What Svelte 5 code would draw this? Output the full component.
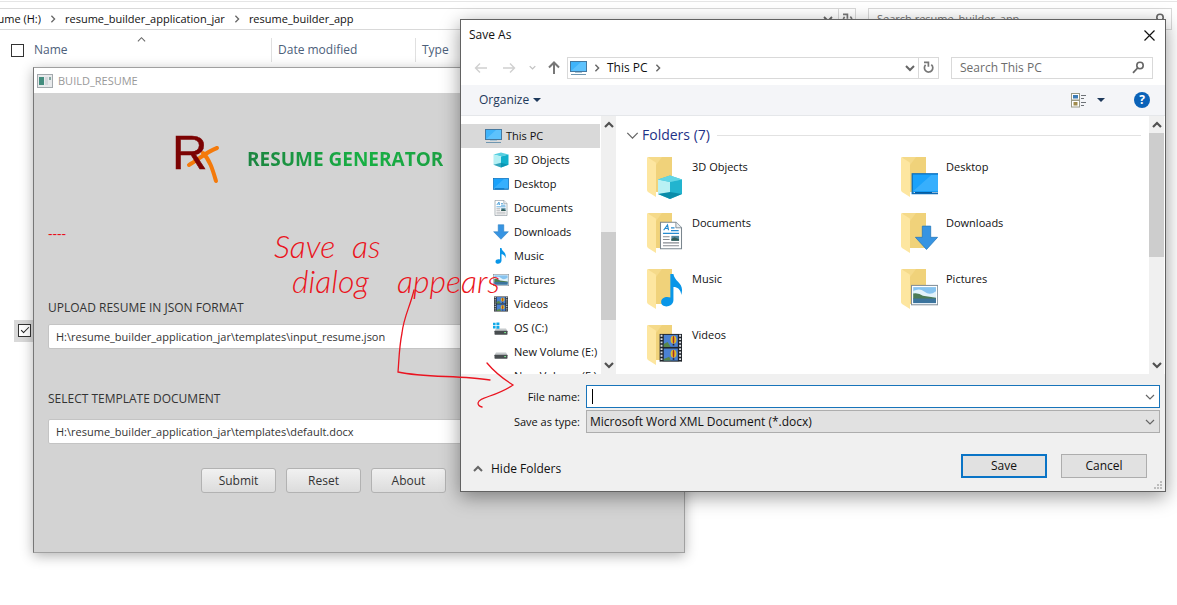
<script lang="ts">
	let jsonPath = $state('H:\\resume_builder_application_jar\\templates\\input_resume.json');
	let templatePath = $state('H:\\resume_builder_application_jar\\templates\\default.docx');
	let explorerSearch = $state('');
	let dialogSearch = $state('');
	let fileName = $state('');
	let fileType = $state('docx');
	let selected = $state('This PC');
	let rowChecked = $state(true);
	let allChecked = $state(false);

	const tree = [
		{ name: '3D Objects', icon: 'cube' },
		{ name: 'Desktop', icon: 'desktop' },
		{ name: 'Documents', icon: 'document' },
		{ name: 'Downloads', icon: 'download' },
		{ name: 'Music', icon: 'music' },
		{ name: 'Pictures', icon: 'picture' },
		{ name: 'Videos', icon: 'video' },
		{ name: 'OS (C:)', icon: 'osdrive' },
		{ name: 'New Volume (E:)', icon: 'drive' },
		{ name: 'New Volume (F:)', icon: 'drive' }
	];

	const folders = [
		{ name: '3D Objects', icon: 'cube' },
		{ name: 'Desktop', icon: 'desktop' },
		{ name: 'Documents', icon: 'document' },
		{ name: 'Downloads', icon: 'download' },
		{ name: 'Music', icon: 'music' },
		{ name: 'Pictures', icon: 'picture' },
		{ name: 'Videos', icon: 'video' }
	];

	function reset() {
		jsonPath = '';
		templatePath = '';
	}
</script>

{#snippet chevron(dir: string, size: number, width: number)}
	<svg class="chevron {dir}" width={size} height={size} viewBox="0 0 10 10" aria-hidden="true">
		<path d="M1 3 L5 7 L9 3" fill="none" stroke="currentColor" stroke-width={width} />
	</svg>
{/snippet}

{#snippet refresh()}
	<svg width="13" height="13" viewBox="0 0 13 13" aria-hidden="true">
		<path d="M9.3 3.6 A4.2 4.2 0 1 1 3.6 3.9" fill="none" stroke="#777" stroke-width="1.7" />
		<path d="M2 1.4 H6.4 V5.8" fill="none" stroke="#777" stroke-width="1.7" />
	</svg>
{/snippet}

{#snippet magnifier()}
	<svg width="13" height="13" viewBox="0 0 13 13" aria-hidden="true">
		<circle cx="8" cy="4.5" r="3.2" fill="none" stroke="#666" stroke-width="1.6" />
		<path d="M5.6 7 L1 11.8" stroke="#666" stroke-width="1.8" />
	</svg>
{/snippet}

{#snippet monitor()}
	<svg width="17" height="16" viewBox="0 0 17 16" aria-hidden="true">
		<rect x="0.5" y="1.5" width="16" height="10" fill="#3fb4fb" stroke="#45789f" />
		<path d="M1 11 L11 2 H16 V11 Z" fill="#72cbff" opacity="0.6" />
		<path d="M5 12.5 H12" stroke="#a8c3d4" />
		<path d="M1 14.5 H16" stroke="#6f96b0" />
	</svg>
{/snippet}

{#snippet glyph(icon: string)}
	{#if icon === 'cube'}
		<path d="M8 0.5 L15.5 2.6 L8 4.6 L0.5 2.6 Z" fill="#57cfe0" />
		<path d="M0.5 2.6 L8 4.6 V15.6 L0.5 12.8 Z" fill="#b4f0f4" />
		<path d="M15.5 2.6 L8 4.6 V15.6 L15.5 12.8 Z" fill="#12b0cb" />
		<path d="M0.5 12.8 L8 10.8 L15.5 12.8 L8 15.6 Z" fill="#0a8ca9" opacity="0.75" />
	{:else if icon === 'desktop'}
		<rect x="0.4" y="2.4" width="15.2" height="11" fill="#1aa2fb" stroke="#0a6dba" stroke-width="0.7" />
		<path d="M1 12 L11 3 H15 V12 Z" fill="#50baff" opacity="0.55" />
		<path d="M1 12.8 H15" stroke="#075b9e" stroke-width="0.7" />
		<path d="M1.2 12.8 H2 M11.6 12.8 H14.6" stroke="#fff" stroke-width="0.5" stroke-dasharray="0.7 0.4" />
	{:else if icon === 'document'}
		<path d="M2 0.4 H10.8 L14 3.6 V15.6 H2 Z" fill="#fff" stroke="#7b868e" stroke-width="0.6" />
		<path d="M10.8 0.4 V3.6 H14" fill="#e9eef1" stroke="#7b868e" stroke-width="0.5" />
		<path d="M3.8 5 L6 2 L6.6 5 M4.6 4 H6.4 M8 3.6 H10 M8 5.2 H12.4 M3.4 6.8 H12.6" fill="none" stroke="#258bd0" stroke-width="0.7" />
		<path d="M3.4 8.7 H7.2 M3.4 10.3 H7.2 M3.4 12.2 H12.6 M3.4 13.9 H12.6" stroke="#878b91" stroke-width="0.6" />
		<path d="M8.2 8.2 H12.6 V11 H8.2 Z" fill="#5389a0" />
		<path d="M8.2 10 L10 9 L12.6 10.2 V11 H8.2 Z" fill="#335c56" />
	{:else if icon === 'download'}
		<path d="M5.2 0.7 H10.8 V7.7 H15.4 L8 15.3 L0.6 7.7 H5.2 Z" fill="#3794e2" stroke="#2478bc" stroke-width="0.5" />
	{:else if icon === 'music'}
		<path d="M7 0 H8.5 C9 4 14.2 4.3 12.3 10.2 C12.2 7.3 10 6.2 8.5 6.3 V12.8 C8.3 16.5 2.5 16.8 2.5 13.7 C2.5 11.4 5.2 10.8 7 11.5 Z" fill="#0996e8" />
	{:else if icon === 'picture'}
		<rect x="0.3" y="2.3" width="15.4" height="11.4" fill="#fff" stroke="#7f8d97" stroke-width="0.6" />
		<rect x="1.3" y="3.3" width="13.4" height="9.4" fill="#86c3ef" />
		<path d="M1.3 5.6 Q5 3.5 8 6 T14.7 5.7 V10 H1.3 Z" fill="#e2f2fa" />
		<path d="M1.3 7 Q4.5 6.4 7 8.4 L14.7 9.6 V10.5 H1.3 Z" fill="#4b7b55" />
		<path d="M1.3 10 H14.7 V12.7 H1.3 Z" fill="#3c749d" />
	{:else if icon === 'video'}
		<rect x="1" y="0.5" width="14" height="15" fill="#20252b" />
		<path d="M2.2 1 V15.5 M13.8 1 V15.5" stroke="#dce0e2" stroke-width="1.2" stroke-dasharray="1 0.8" />
		<rect x="3.6" y="1" width="8.8" height="6.5" fill="#4b82d2" />
		<rect x="3.6" y="8.4" width="8.8" height="6.5" fill="#4b82d2" />
		<path d="M3.6 6 L6 4.8 L8 7.5 H3.6 Z M3.6 14 L7 12.8 L8 14.9 H3.6 Z" fill="#59874a" />
		<ellipse cx="9.7" cy="3.6" rx="1.8" ry="2.1" fill="#e2bd29" />
		<ellipse cx="9.7" cy="3.6" rx="0.5" ry="2.1" fill="#a52b28" />
		<ellipse cx="9.7" cy="11.2" rx="1.8" ry="2.1" fill="#e2bd29" />
		<ellipse cx="9.7" cy="11.2" rx="0.5" ry="2.1" fill="#a52b28" />
		<path d="M9.2 6.4 H10.2 M9.2 14 H10.2" stroke="#2a2020" stroke-width="0.8" />
	{:else}
		<path d="M3 8.5 H13 L14.5 11 H1.5 Z" fill="#c6cacc" />
		<rect x="1.5" y="10.7" width="13" height="4" rx="0.6" fill="#484d50" />
		<rect x="11.2" y="12" width="1.8" height="1.1" fill="#78e58c" />
		{#if icon === 'osdrive'}
			<path d="M0 2.8 H2.6 V5.2 H0 Z M3.4 2.4 H6.4 V5.2 H3.4 Z M0 6 H2.6 V8.4 H0 Z M3.4 6 H6.4 V8.8 H3.4 Z" fill="#10a9e8" />
		{/if}
	{/if}
{/snippet}

{#snippet folderIcon(icon: string)}
	<svg width="37" height="42" viewBox="0 0 37 42" aria-hidden="true">
		<path d="M1 0 H25 V35 H9 Z" fill="#f5da8a" />
		<path d="M15 0 H25 V35 H9 V8 Z" fill="#edcd70" opacity="0.6" />
		<path d="M0 0 L8 5 Q9 5 9 7 V40 L1 35 Q0 34 0 33 Z" fill="#fde6a0" />
		{#if icon === 'cube'}
			<path d="M11 22.5 L23 18.5 L35 22.5 V37 L23 42 L11 37 Z" fill="#3fc4d8" />
			<path d="M11 22.5 L23 25 V36 L11 37 Z" fill="#b9f1f4" />
			<path d="M35 22.5 L23 25 V36 L35 37 Z" fill="#22b4cf" />
			<path d="M11 22.5 L23 18.5 L35 22.5 L23 25 Z" fill="#62d6e5" />
			<path d="M11 37 L23 35 L35 37 L23 42 Z" fill="#0a8ca9" />
		{:else if icon === 'desktop'}
			<g transform="translate(10.5 12.5) scale(1.8)">{@render glyph(icon)}</g>
		{:else if icon === 'document'}
			<g transform="translate(10 8.5) scale(1.75)">{@render glyph(icon)}</g>
		{:else if icon === 'download'}
			<g transform="translate(13.5 12) scale(1.5 1.6)">{@render glyph(icon)}</g>
		{:else if icon === 'music'}
			<g transform="translate(9 5) scale(2.05)">{@render glyph(icon)}</g>
		{:else if icon === 'picture'}
			<g transform="translate(10 12.5) scale(1.7)">{@render glyph(icon)}</g>
		{:else}
			<g transform="translate(11 8) scale(1.6 1.85)">{@render glyph(icon)}</g>
		{/if}
	</svg>
{/snippet}

<div class="desktop">
	<section class="explorer">
		<div class="explorer-nav">
			<div class="explorer-path">
				<span class="crumb first">Resume (H:)</span>
				{@render chevron('right', 8, 1.6)}
				<span class="crumb">resume_builder_application_jar</span>
				{@render chevron('right', 8, 1.6)}
				<span class="crumb">resume_builder_app</span>
				<span class="spacer"></span>
				<button class="flat" aria-label="Previous locations">{@render chevron('down', 10, 1.8)}</button>
				<button class="flat refresh" aria-label="Refresh">{@render refresh()}</button>
			</div>
			<div class="explorer-search">
				<input aria-label="Search folder" placeholder="Search resume_builder_app" bind:value={explorerSearch} />
				{@render magnifier()}
			</div>
		</div>
		<div class="columns">
			<div class="col name-col">
				<span class="sort">{@render chevron('up', 9, 1.2)}</span>
				<label><input type="checkbox" bind:checked={allChecked} />Name</label>
			</div>
			<div class="col date-col">Date modified</div>
			<div class="col">Type</div>
		</div>
		<div class="selected-row">
			<input type="checkbox" aria-label="Select item" bind:checked={rowChecked} />
		</div>
	</section>

	<section class="app-window">
		<header class="app-title">
			<svg width="16" height="14" viewBox="0 0 16 14" aria-hidden="true">
				<rect x="0.5" y="0.5" width="15" height="13" fill="#e8eaec" stroke="#a3a9ad" />
				<rect x="2" y="3" width="5" height="8" fill="#438d7e" />
				<rect x="8" y="3" width="3" height="8" fill="#d3d8dc" />
				<rect x="12" y="3" width="2" height="3" fill="#84a9a3" />
			</svg>
			<span>BUILD_RESUME</span>
		</header>
		<div class="app-body">
			<div class="brand">
				<svg width="56" height="56" viewBox="0 0 56 56" aria-hidden="true">
					<path d="M22 34 C31 29 39 21 50 17" fill="none" stroke="#f47a0b" stroke-width="4" stroke-linecap="round" />
					<path d="M36 22 C43 29 46 40 49 50" fill="none" stroke="#f47a0b" stroke-width="4" stroke-linecap="round" />
					<text x="5" y="38" font-family="Liberation Sans" font-size="49" fill="#7c0303" stroke="#7c0303" stroke-width="0.5">R</text>
				</svg>
				<h1>RESUME GENERATOR</h1>
			</div>
			<p class="message">----</p>
			<label for="json-path">UPLOAD RESUME IN JSON FORMAT</label>
			<input id="json-path" bind:value={jsonPath} />
			<label for="template-path">SELECT TEMPLATE DOCUMENT</label>
			<input id="template-path" bind:value={templatePath} />
			<div class="app-buttons">
				<button>Submit</button>
				<button onclick={reset}>Reset</button>
				<button>About</button>
			</div>
		</div>
	</section>

	<section class="dialog" role="dialog" aria-label="Save As">
		<header class="dialog-title">
			<span>Save As</span>
			<button class="flat" aria-label="Close">
				<svg width="11" height="11" viewBox="0 0 11 11"><path d="M0.5 0.5 L10.5 10.5 M10.5 0.5 L0.5 10.5" stroke="#111" stroke-width="1.2" /></svg>
			</button>
		</header>

		<div class="nav">
			<div class="nav-arrows">
				<button class="flat" aria-label="Back">
					<svg width="13" height="12" viewBox="0 0 13 12"><path d="M13 6 H1.5 M6 1.5 L1.5 6 L6 10.5" fill="none" stroke="#d0d0d0" stroke-width="1.4" /></svg>
				</button>
				<button class="flat forward" aria-label="Forward">
					<svg width="13" height="12" viewBox="0 0 13 12"><path d="M0 6 H11.5 M7 1.5 L11.5 6 L7 10.5" fill="none" stroke="#d0d0d0" stroke-width="1.4" /></svg>
				</button>
				<button class="flat pale" aria-label="Recent">{@render chevron('down', 7, 1.8)}</button>
				<button class="flat" aria-label="Up">
					<svg width="12" height="13" viewBox="0 0 12 13"><path d="M6 13 V2 M1 6.5 L6 1.5 L11 6.5" fill="none" stroke="#777" stroke-width="2" /></svg>
				</button>
			</div>
			<div class="address">
				{@render monitor()}
				{@render chevron('right', 8, 1.8)}
				<span>This PC</span>
				{@render chevron('right', 8, 1.8)}
				<span class="spacer"></span>
				<button class="flat" aria-label="Locations">{@render chevron('down', 10, 2)}</button>
				<button class="flat refresh" aria-label="Refresh This PC">{@render refresh()}</button>
			</div>
			<div class="search">
				<input aria-label="Search This PC" placeholder="Search This PC" bind:value={dialogSearch} />
				{@render magnifier()}
			</div>
		</div>

		<div class="toolbar">
			<button class="flat organize">Organize <i class="triangle"></i></button>
			<span class="spacer"></span>
			<button class="flat view" aria-label="Change view">
				<svg width="16" height="15" viewBox="0 0 16 15">
					<rect x="0.5" y="0.5" width="8" height="6.5" fill="#fff" stroke="#9a9a86" />
					<rect x="0.5" y="7.5" width="8" height="6.5" fill="#fff" stroke="#9a9a86" />
					<rect x="2" y="2" width="5" height="3.5" fill="#3d7cb6" />
					<rect x="2.5" y="9" width="4" height="3.5" fill="#a08b4d" />
					<path d="M10 2.5 H15 M10 5.5 H13 M10 9.5 H15 M10 12.5 H13" stroke="#6d7277" />
				</svg>
				<i class="triangle"></i>
			</button>
			<button class="help" aria-label="Help">?</button>
		</div>

		<div class="browser">
			<nav class="tree">
				<button class="tree-item root" class:selected={selected === 'This PC'} onclick={() => selected = 'This PC'}>
					{@render monitor()}
					<span>This PC</span>
				</button>
				{#each tree as item (item.name)}
					<button class="tree-item" class:selected={selected === item.name} onclick={() => selected = item.name}>
						<svg width="16" height="16" viewBox="0 0 16 16" aria-hidden="true">{@render glyph(item.icon)}</svg>
						<span>{item.name}</span>
					</button>
				{/each}
			</nav>
			<div class="scrollbar tree-scroll">
				{@render chevron('up', 10, 2.2)}
				<div class="track"><div class="thumb"></div></div>
				{@render chevron('down', 10, 2.2)}
			</div>
			<div class="files">
				<div class="group">
					{@render chevron('down', 13, 1)}
					<h2>Folders (7)</h2>
					<hr />
				</div>
				<div class="folder-grid">
					{#each folders as folder (folder.name)}
						<button class="folder">
							{@render folderIcon(folder.icon)}
							<span>{folder.name}</span>
						</button>
					{/each}
				</div>
			</div>
			<div class="scrollbar file-scroll">
				{@render chevron('up', 10, 2.2)}
				<div class="track"><div class="thumb"></div></div>
				{@render chevron('down', 10, 2.2)}
			</div>
		</div>

		<div class="fields">
			<label for="file-name">File name:</label>
			<div class="combo name">
				<i class="caret"></i>
				<input id="file-name" bind:value={fileName} />
				{@render chevron('down', 10, 1.2)}
			</div>
			<label for="file-type">Save as type:</label>
			<div class="combo type">
				<select id="file-type" bind:value={fileType}>
					<option value="docx">Microsoft Word XML Document (*.docx)</option>
				</select>
				{@render chevron('down', 10, 1.2)}
			</div>
		</div>

		<footer class="dialog-footer">
			<button class="flat hide">{@render chevron('up', 10, 2)} Hide Folders</button>
			<span class="spacer"></span>
			<button class="action primary">Save</button>
			<button class="action">Cancel</button>
		</footer>
		<svg class="grip" width="9" height="9" viewBox="0 0 9 9" aria-hidden="true">
			<path d="M6 0 H8 V2 H6 Z M3 3 H5 V5 H3 Z M6 3 H8 V5 H6 Z M0 6 H2 V8 H0 Z M3 6 H5 V8 H3 Z M6 6 H8 V8 H6 Z" fill="#bdbdbd" />
		</svg>
	</section>

	<!-- red pen note over both windows -->
	<svg class="note" width="260" height="190" viewBox="0 0 260 190">
		<g class="pen-text">
			<text x="4" y="30">Save</text>
			<text x="82" y="30">as</text>
			<text x="22" y="65">dialog</text>
			<text x="127" y="65">appears</text>
		</g>
		<path d="M144 62 C140 79 134 88 132 105 C129 120 129 133 128 144 C155 150 190 147 220 152" />
		<path d="M217 135 Q227 147 243 157 C225 169 209 169 208 175 Q208 178 212 179" />
	</svg>
</div>

<style>
	:global(body) {
		margin: 0;
		background: #fff;
	}

	.desktop {
		position: relative;
		min-height: 100vh;
		overflow: hidden;
		font-family: 'Open Sans', 'Noto Sans', sans-serif;
		font-size: 12px;
		line-height: 16px;
		color: #111;
	}

	button, input, select {
		font: inherit;
		color: inherit;
		box-sizing: border-box;
		margin: 0;
	}

	svg {
		flex: none;
		display: block;
	}

	.spacer {
		flex: 1;
	}

	.flat {
		display: flex;
		align-items: center;
		justify-content: center;
		padding: 0;
		border: none;
		background: none;
	}

	.chevron {
		color: #666;
	}

	.chevron.right {
		transform: rotate(-90deg);
	}

	.chevron.up {
		transform: rotate(180deg);
	}

	/* explorer behind the windows */
	.explorer {
		padding-top: 1px;
	}

	.explorer-nav {
		display: flex;
		gap: 12px;
		padding: 6px 5px 0 0;
		border-top: 1px solid #e5e5e5;
		font-size: 11px;
	}

	.explorer-path, .explorer-search {
		display: flex;
		align-items: center;
		box-sizing: border-box;
		height: 22px;
		border: 1px solid #d9d9d9;
	}

	.explorer-path {
		flex: 1;
		gap: 8px;
		border-left: none;
	}

	.crumb.first {
		display: flex;
		justify-content: flex-end;
		width: 41px;
		overflow: hidden;
		white-space: nowrap;
	}

	.explorer-path .refresh {
		width: 17px;
		height: 20px;
		border-left: 1px solid #d9d9d9;
	}

	.explorer-search {
		width: 304px;
		padding: 0 6px 0 8px;
	}

	.explorer-search input, .search input {
		flex: 1;
		min-width: 0;
		padding: 0;
		border: none;
		outline: none;
		background: none;
	}

	input::placeholder {
		color: #6d6d6d;
		opacity: 1;
	}

	.columns {
		display: flex;
		height: 24px;
		margin-top: 8px;
		color: #4c607a;
	}

	.col {
		position: relative;
		display: flex;
		align-items: center;
		padding-left: 6px;
	}

	.name-col {
		width: 254px;
		padding-left: 11px;
		padding-right: 6px;
		border-right: 1px solid #e0e0e0;
	}

	.name-col label {
		display: flex;
		align-items: center;
		gap: 10px;
	}

	.sort {
		position: absolute;
		left: 137px;
		top: -3px;
	}

	.date-col {
		width: 137px;
		border-right: 1px solid #e0e0e0;
	}

	input[type='checkbox'] {
		display: grid;
		place-items: center;
		appearance: none;
		width: 13px;
		height: 13px;
		border: 1px solid #333;
		background: #fff;
	}

	input[type='checkbox']:checked::after {
		content: '';
		width: 7px;
		height: 3px;
		margin-bottom: 3px;
		border-left: 1px solid #222;
		border-bottom: 1px solid #222;
		transform: rotate(-45deg);
	}

	.selected-row {
		box-sizing: border-box;
		width: 40px;
		height: 22px;
		margin: 258px 0 0 14px;
		padding: 4px;
		background: #d9d9d9;
	}

	/* resume builder window */
	.app-window {
		position: absolute;
		left: 33px;
		right: 492px;
		top: 67px;
		border: 1px solid #a0a0a0;
		border-left-color: #777;
		background: #d3d3d3;
		box-shadow: 0 3px 12px rgba(0, 0, 0, 0.3);
		color: #333;
	}

	.app-title {
		display: flex;
		align-items: center;
		gap: 5px;
		height: 25px;
		padding-left: 3px;
		background: #fff;
		color: #999;
		font-size: 11px;
	}

	.app-body {
		display: flex;
		flex-direction: column;
		padding: 38px 14px 59px;
	}

	.brand {
		display: flex;
		align-items: center;
		gap: 24px;
		padding-left: 119px;
		height: 56px;
	}

	h1 {
		margin: 0;
		font-size: 19px;
		line-height: 24px;
		font-weight: 700;
		background: linear-gradient(90deg, #1c8440, #17b043 60%, #1ba043);
		background-clip: text;
		color: transparent;
	}

	.message {
		margin: 39px 0 58px;
		color: #e80c19;
		font-size: 14px;
	}

	.app-body > input {
		height: 25px;
		margin: 8px 0 42px;
		padding: 0 7px;
		border: 1px solid #c4c4c4;
		border-radius: 2px;
		background: #fff;
		font-size: 11px;
	}

	.app-body > #template-path {
		height: 25px;
		margin: 12px 0 24px;
	}

	.app-buttons {
		display: flex;
		gap: 10px;
		padding-left: 153px;
	}

	.app-buttons button {
		width: 75px;
		height: 25px;
		padding: 0;
		border: 1px solid #b2b2b2;
		border-radius: 3px;
		background: linear-gradient(#f1f1f1, #dcdcdc);
	}

	/* save as dialog */
	.dialog {
		position: absolute;
		left: 460px;
		right: 11px;
		top: 19px;
		border: 1px solid #626262;
		background: #f0f0f0;
		box-shadow: 0 5px 18px rgba(0, 0, 0, 0.4);
	}

	.dialog-title {
		display: flex;
		align-items: center;
		justify-content: space-between;
		height: 30px;
		padding: 0 10px 0 8px;
		background: #fff;
	}

	.nav {
		display: flex;
		align-items: center;
		height: 35px;
		padding: 0 12px 0 13px;
		box-sizing: border-box;
		background: #fff;
	}

	.nav-arrows {
		display: flex;
		align-items: center;
		justify-content: space-between;
		width: 86px;
		margin-right: 7px;
	}

	.nav-arrows .forward {
		margin-left: 4px;
	}

	.nav-arrows .pale {
		opacity: 0.4;
	}

	.address, .search {
		display: flex;
		align-items: center;
		box-sizing: border-box;
		height: 22px;
		border: 1px solid #d9d9d9;
	}

	.address {
		flex: 1;
		gap: 6px;
		padding-left: 2px;
	}

	.address .refresh {
		width: 20px;
		height: 20px;
		border-left: 1px solid #d9d9d9;
	}

	.address .refresh, .explorer-path .refresh {
		margin-left: -3px;
	}

	.search {
		width: 202px;
		margin-left: 12px;
		padding: 0 7px 0 8px;
	}

	.toolbar {
		display: flex;
		align-items: center;
		height: 30px;
		padding: 0 15px 0 18px;
		border-bottom: 1px solid #e5e7ea;
		background: #f4f5f8;
		color: #1e395b;
	}

	.triangle {
		border: 4px solid transparent;
		border-top-color: #1e395b;
		border-bottom: none;
	}

	.organize {
		gap: 4px;
	}

	.view {
		gap: 10px;
		margin-right: 29px;
	}

	.help {
		width: 16px;
		height: 16px;
		padding: 0;
		border: none;
		border-radius: 50%;
		background: #0a62b8;
		color: #fff;
		font-weight: 700;
		line-height: 16px;
	}

	.browser {
		display: flex;
		height: 258px;
		background: #fff;
		font-size: 11px;
	}

	.tree {
		width: 139px;
		padding-top: 8px;
		box-sizing: border-box;
		overflow: hidden;
	}

	.tree-item {
		display: flex;
		align-items: center;
		gap: 5px;
		width: 100%;
		height: 24px;
		padding: 0 0 0 32px;
		border: none;
		background: none;
		text-align: left;
		white-space: nowrap;
	}

	.tree-item.root {
		gap: 4px;
		padding-left: 24px;
	}

	.tree-item.selected {
		background: #d9d9d9;
	}

	.scrollbar {
		display: flex;
		flex-direction: column;
		align-items: center;
		width: 15px;
		padding: 4px 0;
		box-sizing: border-box;
		background: #f0f0f0;
	}

	.tree-scroll {
		margin: 0 1px;
	}

	.file-scroll {
		margin-right: 1px;
	}

	.scrollbar .chevron {
		color: #505050;
	}

	.track {
		flex: 1;
		width: 100%;
		margin: 3px 0;
	}

	.thumb {
		background: #cdcdcd;
	}

	.tree-scroll .thumb {
		height: 88px;
		margin-top: 99px;
	}

	.file-scroll .thumb {
		height: 124px;
	}

	.files {
		flex: 1;
		padding: 8px 8px 0 9px;
	}

	.group {
		display: flex;
		align-items: center;
		gap: 3px;
		height: 22px;
	}

	h2 {
		margin: 0;
		font-size: 14px;
		line-height: 20px;
		font-weight: 400;
		color: #1e3287;
	}

	hr {
		flex: 1;
		margin: 0 0 0 4px;
		border: none;
		border-top: 1px solid #e2e2e2;
	}

	.folder-grid {
		display: grid;
		grid-template-columns: 254px 1fr;
		grid-auto-rows: 56px;
		padding: 11px 0 0 21px;
	}

	.folder {
		display: flex;
		align-items: flex-start;
		gap: 8px;
		padding: 0;
		border: none;
		background: none;
		text-align: left;
	}

	.folder span {
		padding-top: 2px;
	}

	.fields {
		display: grid;
		grid-template-columns: 119px 1fr;
		align-items: center;
		gap: 2px 6px;
		padding: 11px 5px 0 0;
	}

	.fields label {
		text-align: right;
		font-size: 11px;
	}

	.combo {
		display: flex;
		align-items: center;
		box-sizing: border-box;
		height: 23px;
		padding-right: 4px;
		border: 1px solid #adadad;
		background: #e1e1e1;
	}

	.combo.name {
		padding-left: 5px;
		border-color: #1874ba;
		background: #fff;
	}

	.combo input, .combo select {
		flex: 1;
		min-width: 0;
		height: 21px;
		padding: 0 3px;
		border: none;
		outline: none;
		appearance: none;
		background: none;
	}

	.caret {
		width: 1px;
		height: 15px;
		background: #000;
	}

	.combo:focus-within .caret {
		visibility: hidden;
	}

	.dialog-footer {
		display: flex;
		align-items: flex-start;
		gap: 14px;
		padding: 21px 18px 7px 12px;
	}

	.hide {
		gap: 8px;
		height: 30px;
	}

	.action {
		width: 86px;
		height: 24px;
		padding: 0;
		border: 1px solid #adadad;
		background: #e1e1e1;
	}

	.action.primary {
		border: 2px solid #0a74c6;
	}

	.grip {
		position: absolute;
		right: 2px;
		bottom: 1px;
	}

	.note {
		position: absolute;
		left: 270px;
		top: 228px;
		pointer-events: none;
	}

	.note path {
		fill: none;
		stroke: #ea1420;
		stroke-width: 1.3;
		stroke-linecap: round;
	}

	.pen-text {
		font-family: Lato, sans-serif;
		font-size: 32px;
		font-style: italic;
		font-weight: 300;
		fill: #ea1420;
	}
</style>
